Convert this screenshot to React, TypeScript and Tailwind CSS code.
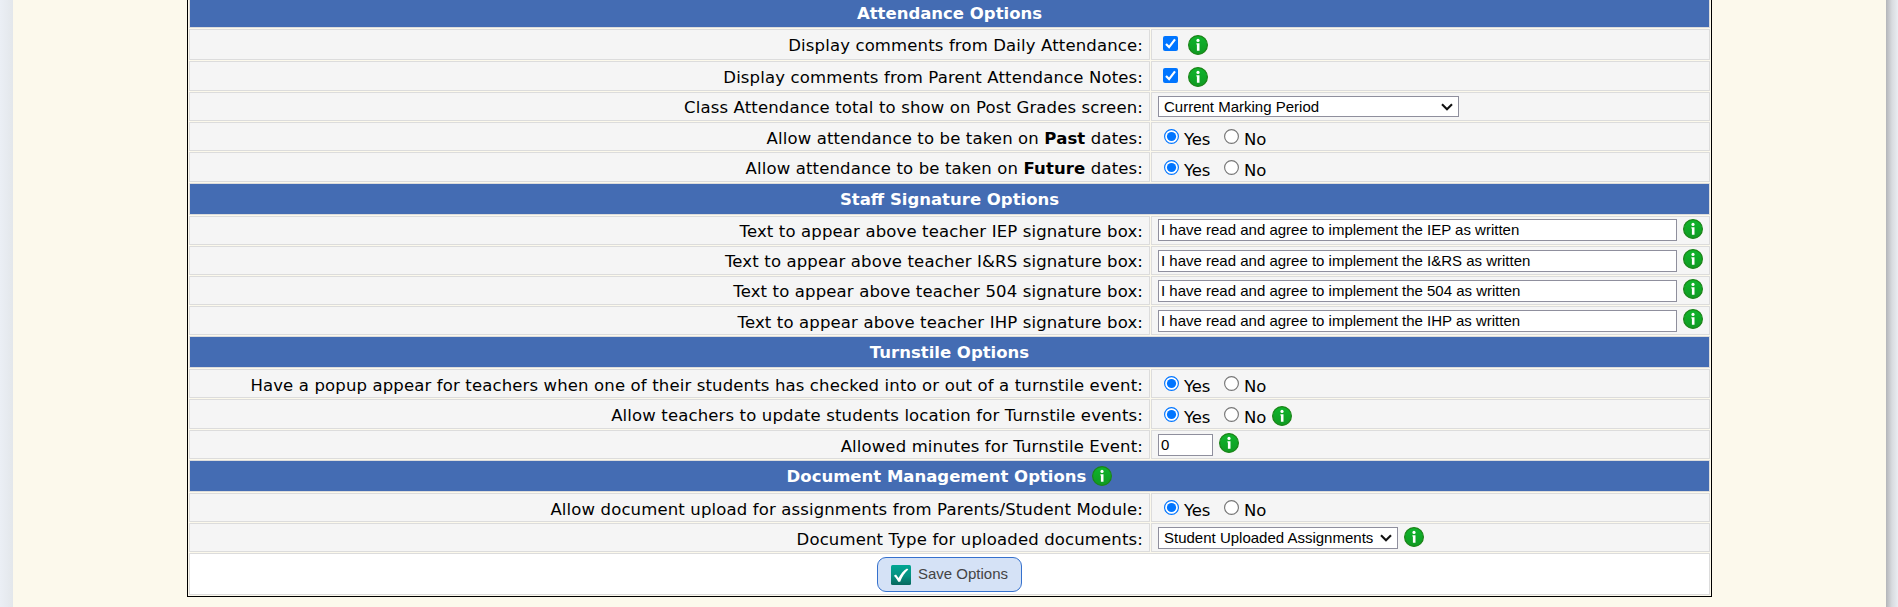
import React from "react";

type ControlProps = { children: React.ReactNode };

function Info({ className }: { className: string }) {
  return (
    <svg viewBox="0 0 20 20" className={`h-5 w-5 shrink-0 ${className}`}>
      <defs>
        <linearGradient id="info-fill" x1="0" y1="0" x2="0" y2="1">
          <stop offset="0" stopColor="#0fb52c" />
          <stop offset="1" stopColor="#109a22" />
        </linearGradient>
      </defs>
      <circle cx="10" cy="10" r="9.4" fill="url(#info-fill)" stroke="#1c8418" strokeWidth="1.2" />
      <circle cx="10" cy="5.4" r="1.6" fill="#fff" />
      <path d="M8.4 8.2h3.1v7.6H8.9V9.6h-.5z" fill="#fff" />
    </svg>
  );
}

function Checkbox({ className }: { className: string }) {
  return (
    <svg viewBox="0 0 15 15" className={`ml-[11px] mr-2.5 h-[15px] w-[15px] shrink-0 ${className}`}>
      <rect width="15" height="15" rx="2" fill="#0075ff" />
      <path d="M3 8l3.1 3.1L12 3.4" fill="none" stroke="#fff" strokeWidth="2.2" />
    </svg>
  );
}

function Radio({ on, className }: { on?: boolean; className: string }) {
  return (
    <svg viewBox="0 0 15 15" className={`h-[15px] w-[15px] shrink-0 ${className}`}>
      <circle cx="7.5" cy="7.5" r="6.9" fill="#fff" stroke={on ? "#0075ff" : "#767676"} strokeWidth="1.15" />
      {on && <circle cx="7.5" cy="7.5" r="4.6" fill="#0075ff" />}
    </svg>
  );
}

function YesNo({ radio, text }: { radio: string; text: string }) {
  return (
    <>
      <Radio on className={`ml-3 ${radio}`} />
      <span className={`ml-[5px] w-10 leading-5 tracking-[-0.1px] ${text}`}>Yes</span>
      <Radio className={radio} />
      <span className={`ml-[5px] w-7 leading-5 tracking-[-0.1px] ${text}`}>No</span>
    </>
  );
}

function Select({ children, className }: ControlProps & { className: string }) {
  return (
    <div className={`ml-1.5 flex shrink-0 items-center justify-between border border-[#8f8f9d] bg-white pl-[5px] pr-[5px] font-['Liberation_Sans',sans-serif] text-[15px] ${className}`}>
      <span className="whitespace-nowrap pt-px">{children}</span>
      <svg viewBox="0 0 12 8" className="h-2 w-3">
        <path d="M1 1.2l5 5 5-5" fill="none" stroke="#111" strokeWidth="2.1" />
      </svg>
    </div>
  );
}

function TextBox({ children, className }: ControlProps & { className: string }) {
  return (
    <div className={`ml-1.5 flex h-[22px] shrink-0 items-center border border-[#8f8f9d] bg-white px-0.5 font-['Liberation_Sans',sans-serif] text-[15px] ${className}`}>
      <span className="whitespace-nowrap">{children}</span>
    </div>
  );
}

function Row({ height, label, labelClass, children }: ControlProps & { height: string; label: React.ReactNode; labelClass: string }) {
  return (
    <div className={`flex gap-px ${height}`}>
      <div className="flex w-[961px] shrink-0 items-start justify-end border border-[#dcdcdc] bg-[#f5f5f5] pr-[6px]">
        <span className={`whitespace-nowrap leading-5 tracking-[0.14px] ${labelClass}`}>{label}</span>
      </div>
      <div className="flex flex-1 items-start border border-[#dcdcdc] bg-[#f5f5f5]">{children}</div>
    </div>
  );
}

function Heading({ className, children }: ControlProps & { className: string }) {
  return (
    <div className={`flex items-start justify-center border border-[#dcdcdc] bg-[#446cb3] font-bold leading-5 text-white ${className}`}>
      {children}
    </div>
  );
}

export default function App() {
  return (
    <div className="flex h-[607px] w-[1898px] overflow-hidden bg-[#e9edf2] font-['DejaVu_Sans',sans-serif] text-[16.5px] text-black">
      <div className="w-[13px] shrink-0 bg-linear-to-r from-[#ebeff5] to-[#e3e7eb]" />
      <div className="h-full w-[1873px] shrink-0 bg-[#fcf9ec] pl-[174px]">
        <div className="flex h-[597px] w-[1525px] flex-col gap-px border-x border-b border-black px-px pb-px">
          <Heading className="h-7 border-t-0 pt-1">Attendance Options</Heading>
          <Row height="h-[31px]" label="Display comments from Daily Attendance:" labelClass="mt-[6px]">
            <Checkbox className="mt-1.5" />
            <Info className="mt-[5px]" />
          </Row>
          <Row height="h-[30px]" label="Display comments from Parent Attendance Notes:" labelClass="mt-[6px]">
            <Checkbox className="mt-1.5" />
            <Info className="mt-[5px]" />
          </Row>
          <Row height="h-[29px]" label="Class Attendance total to show on Post Grades screen:" labelClass="mt-[5px]">
            <Select className="mt-[3px] h-[21px] w-[301px]">Current Marking Period</Select>
          </Row>
          <Row height="h-[29px]" label={<>Allow attendance to be taken on <b>Past</b> dates:</>} labelClass="mt-[6px]">
            <YesNo radio="mt-1.5" text="mt-[7px]" />
          </Row>
          <Row height="h-[30px]" label={<>Allow attendance to be taken on <b>Future</b> dates:</>} labelClass="mt-[6px]">
            <YesNo radio="mt-[6.5px]" text="mt-2" />
          </Row>
          <Heading className="h-8 pt-1.5">Staff Signature Options</Heading>
          <Row height="h-[29px]" label="Text to appear above teacher IEP signature box:" labelClass="mt-[5px]">
            <TextBox className="mt-0.5 w-[519px]">I have read and agree to implement the IEP as written</TextBox>
            <Info className="ml-1.5 mt-0.5" />
          </Row>
          <Row height="h-[29px]" label="Text to appear above teacher I&RS signature box:" labelClass="mt-[5px]">
            <TextBox className="mt-[3px] w-[519px]">I have read and agree to implement the I&amp;RS as written</TextBox>
            <Info className="ml-1.5 mt-0.5" />
          </Row>
          <Row height="h-[29px]" label="Text to appear above teacher 504 signature box:" labelClass="mt-[5px]">
            <TextBox className="mt-[3px] w-[519px]">I have read and agree to implement the 504 as written</TextBox>
            <Info className="ml-1.5 mt-0.5" />
          </Row>
          <Row height="h-[29px]" label="Text to appear above teacher IHP signature box:" labelClass="mt-[6px]">
            <TextBox className="mt-[3px] w-[519px]">I have read and agree to implement the IHP as written</TextBox>
            <Info className="ml-1.5 mt-0.5" />
          </Row>
          <Heading className="h-8 pt-1.5">Turnstile Options</Heading>
          <Row height="h-[29px]" label="Have a popup appear for teachers when one of their students has checked into or out of a turnstile event:" labelClass="mt-[6px]">
            <YesNo radio="mt-1.5" text="mt-[7px]" />
          </Row>
          <Row height="h-[30px]" label="Allow teachers to update students location for Turnstile events:" labelClass="mt-[6px]">
            <YesNo radio="mt-[6.5px]" text="mt-2" />
            <Info className="mt-1.5" />
          </Row>
          <Row height="h-[29px]" label="Allowed minutes for Turnstile Event:" labelClass="mt-[6px]">
            <TextBox className="mt-[3px] w-[55px]">0</TextBox>
            <Info className="ml-1.5 mt-0.5" />
          </Row>
          <Heading className="h-8 pt-1.5">
            <span>Document Management Options</span>
            <Info className="ml-1.5 -mt-px" />
          </Heading>
          <Row height="h-[29px]" label="Allow document upload for assignments from Parents/Student Module:" labelClass="mt-[6px]">
            <YesNo radio="mt-1.5" text="mt-[7px]" />
          </Row>
          <Row height="h-[29px]" label="Document Type for uploaded documents:" labelClass="mt-[6px]">
            <Select className="mt-[3px] h-[22px] w-60">Student Uploaded Assignments</Select>
            <Info className="ml-1.5 mt-[3px]" />
          </Row>
          <div className="flex h-[42px] items-start justify-center border border-[#dcdcdc] bg-white pt-[3px]">
            <button className="flex h-[35px] w-[145px] items-center rounded-[9px] border border-[#3571cd] bg-[#d5e2f6] pl-[13px] font-['Liberation_Sans',sans-serif] text-[15px] text-[#444]">
              <svg viewBox="0 0 20 20" className="mr-[7px] h-5 w-5 shrink-0">
                <defs>
                  <linearGradient id="save-fill" x1="0" y1="0" x2="0" y2="1">
                    <stop offset="0" stopColor="#00a693" />
                    <stop offset="0.55" stopColor="#059080" />
                    <stop offset="1" stopColor="#07685e" />
                  </linearGradient>
                </defs>
                <rect width="20" height="20" rx="1.5" fill="url(#save-fill)" />
                <path d="M2.8 10.800l2.200-1.200 2.500 3.500C9.700 9.200 12.300 5.800 16 3.600l1.300 1C13.800 7.500 11.200 11.600 9.200 16.700H7.200C6 14.400 4.600 12.600 2.800 10.800z" fill="#fff" />
              </svg>
              <span className="whitespace-nowrap">Save Options</span>
            </button>
          </div>
        </div>
      </div>
      <div className="flex-1 bg-linear-to-r from-[#b3b5b9] via-[#d8dbdf] to-[#e9edf2]" />
    </div>
  );
}
